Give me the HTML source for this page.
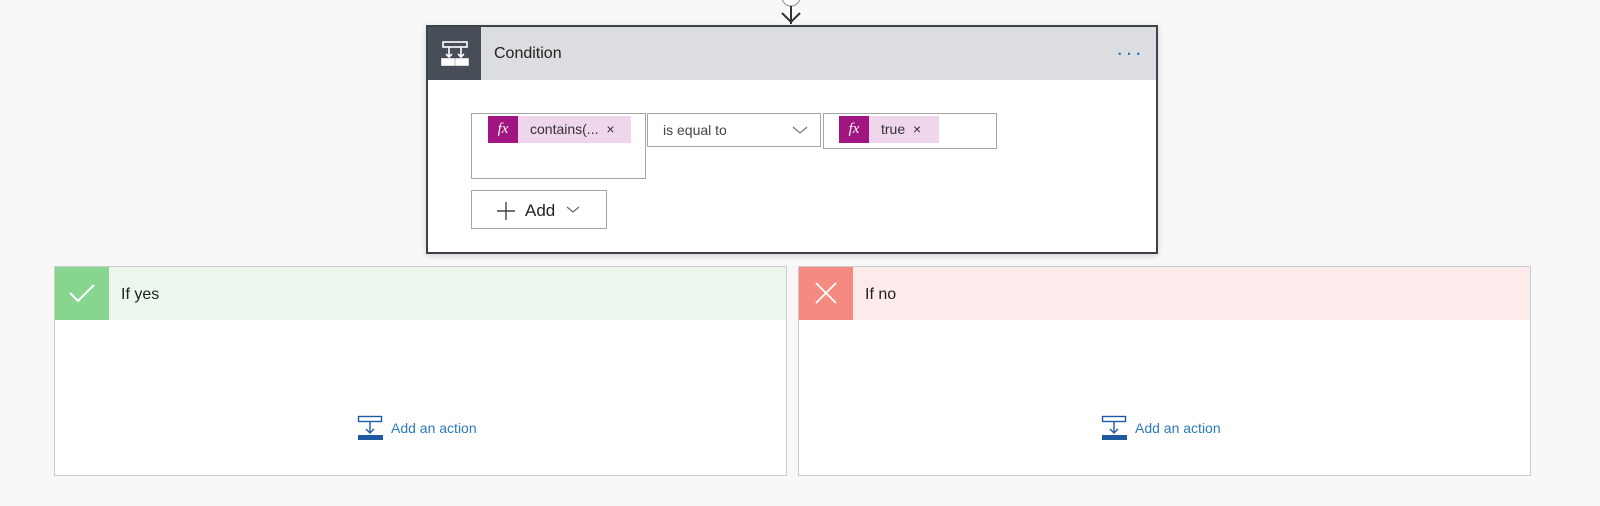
<!DOCTYPE html>
<html><head><style>
body{margin:0;width:1600px;height:506px;background:#f8f8f8;font-family:"Liberation Sans",sans-serif;position:relative;overflow:hidden}
.a{position:absolute;box-sizing:border-box}
.t{font-size:16px;color:#222}
.fx{background:#a0157f;color:#fff;font-family:"Liberation Serif",serif;font-style:italic;font-size:15px;text-align:center;line-height:27px}
.chip{background:#f0d6ec;font-size:14px;color:#333;line-height:27px}
.link{color:#2b7bb9;font-size:14px}
</style></head><body>
<svg class="a" style="left:776px;top:0" width="30" height="26"><circle cx="15" cy="-3" r="9" fill="#fff" stroke="#999" stroke-width="1.2"/><line x1="15" y1="6" x2="15" y2="24" stroke="#333" stroke-width="2"/><polyline points="6,13 15,22 24,13" fill="none" stroke="#333" stroke-width="2"/></svg>
<div class="a" style="left:426px;top:25px;width:732px;height:229px;background:#fff;border:2px solid #3d434b;box-shadow:0 2px 6px rgba(0,0,0,.15)"></div>
<div class="a" style="left:428px;top:27px;width:728px;height:53px;background:#dcdde0"></div>
<div class="a" style="left:428px;top:27px;width:53px;height:53px;background:#474e57"></div>
<svg class="a" style="left:441px;top:40px" width="28" height="28" fill="none" stroke="#fff" stroke-width="1.6"><rect x="2" y="2" width="24" height="5"/><line x1="8" y1="7" x2="8" y2="17"/><line x1="20" y1="7" x2="20" y2="17"/><polyline points="5,14 8,17 11,14"/><polyline points="17,14 20,17 23,14"/><rect x="1" y="19" width="12" height="6" fill="#fff"/><rect x="15" y="19" width="12" height="6" fill="#fff"/></svg>
<div class="a t" style="left:494px;top:45px">Condition</div>
<div class="a" style="left:1116px;top:40px;color:#2b7bb9;font-size:22px;letter-spacing:2px">···</div>
<div class="a" style="left:471px;top:113px;width:175px;height:66px;border:1px solid #a6a6a6"></div>
<div class="a fx" style="left:488px;top:116px;width:30px;height:27px">fx</div>
<div class="a chip" style="left:518px;top:116px;width:113px;height:27px;padding-left:12px">contains(... <span style="margin-left:4px">×</span></div>
<div class="a" style="left:647px;top:113px;width:174px;height:34px;border:1px solid #a6a6a6;font-size:14px;color:#444;padding:8px 15px">is equal to</div>
<svg class="a" style="left:792px;top:125px" width="16" height="10"><polyline points="1,2 8,8 15,2" fill="none" stroke="#777" stroke-width="1.2"/></svg>
<div class="a" style="left:823px;top:113px;width:174px;height:36px;border:1px solid #a6a6a6"></div>
<div class="a fx" style="left:839px;top:116px;width:30px;height:27px">fx</div>
<div class="a chip" style="left:869px;top:116px;width:70px;height:27px;padding-left:12px">true <span style="margin-left:4px">×</span></div>
<div class="a" style="left:471px;top:190px;width:136px;height:39px;border:1px solid #a6a6a6;background:#fff"></div>
<svg class="a" style="left:496px;top:201px" width="20" height="20"><line x1="10" y1="1" x2="10" y2="19" stroke="#444" stroke-width="1.4"/><line x1="1" y1="10" x2="19" y2="10" stroke="#444" stroke-width="1.4"/></svg>
<div class="a" style="left:525px;top:201px;font-size:17px;color:#222">Add</div>
<svg class="a" style="left:566px;top:206px" width="14" height="8"><polyline points="1,1 7,6 13,1" fill="none" stroke="#666" stroke-width="1.2"/></svg>

<div class="a" style="left:54px;top:266px;width:733px;height:210px;background:#fff;border:1px solid #ccc"></div>
<div class="a" style="left:55px;top:267px;width:731px;height:53px;background:#ebf6ec"></div>
<div class="a" style="left:55px;top:267px;width:54px;height:53px;background:#87d58e"></div>
<svg class="a" style="left:67px;top:280px" width="30" height="26"><polyline points="3,13 11,21 27,5" fill="none" stroke="#fff" stroke-width="2"/></svg>
<div class="a t" style="left:121px;top:286px">If yes</div>
<svg class="a" style="left:357px;top:415px" width="27" height="26"><rect x="1.5" y="1.5" width="23" height="5" fill="none" stroke="#1e5aa0" stroke-width="1.4"/><line x1="13" y1="7" x2="13" y2="18" stroke="#1e5aa0" stroke-width="1.4"/><polyline points="9,14 13,18 17,14" fill="none" stroke="#1e5aa0" stroke-width="1.4"/><rect x="1" y="20" width="25" height="5" fill="#1e5aa0"/></svg>
<div class="a link" style="left:391px;top:420px">Add an action</div>

<div class="a" style="left:798px;top:266px;width:733px;height:210px;background:#fff;border:1px solid #ccc"></div>
<div class="a" style="left:799px;top:267px;width:731px;height:53px;background:#fdeaea"></div>
<div class="a" style="left:799px;top:267px;width:54px;height:53px;background:#f58a80"></div>
<svg class="a" style="left:813px;top:280px" width="26" height="26"><path d="M3 3L23 23M23 3L3 23" stroke="#fff" stroke-width="1.8"/></svg>
<div class="a t" style="left:865px;top:286px">If no</div>
<svg class="a" style="left:1101px;top:415px" width="27" height="26"><rect x="1.5" y="1.5" width="23" height="5" fill="none" stroke="#1e5aa0" stroke-width="1.4"/><line x1="13" y1="7" x2="13" y2="18" stroke="#1e5aa0" stroke-width="1.4"/><polyline points="9,14 13,18 17,14" fill="none" stroke="#1e5aa0" stroke-width="1.4"/><rect x="1" y="20" width="25" height="5" fill="#1e5aa0"/></svg>
<div class="a link" style="left:1135px;top:420px">Add an action</div>
</body></html>
